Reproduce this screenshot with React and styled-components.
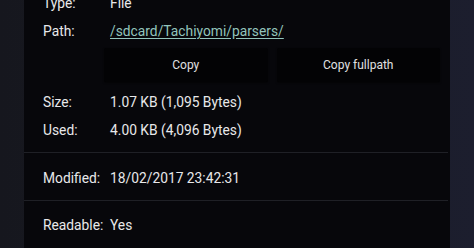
import React from "react";
import styled, { createGlobalStyle } from "styled-components";

const GlobalStyle = createGlobalStyle`
  html, body {
    margin: 0;
    padding: 0;
    height: 100%;
    overflow: hidden;
  }
  body {
    background: linear-gradient(90deg, #16171e 0%, #191a25 50%, #1c1e2e 100%);
    font-family: Roboto, "Liberation Sans", sans-serif;
  }
`;

const Page = styled.div`
  display: flex;
  justify-content: center;
  height: 248px;
`;

// the dialog is scrolled a little: the Type row is half hidden at the top
const Dialog = styled.div`
  width: 426px;
  margin-top: -11px;
  background: #07070b;
  display: flex;
  flex-direction: column;
`;

const Section = styled.div`
  display: flex;
  flex-direction: column;
  padding: ${props => props.pad || "0"};
  border-bottom: ${props => (props.divider ? "1px solid #1f2026" : "none")};
  margin-right: 2px;
`;

const Row = styled.div`
  display: flex;
  align-items: center;
  height: 28px;
  padding-left: 19px;
  font-size: 13.8px;
  color: #e8e8ea;
`;

const Label = styled.span`
  width: 67px;
  flex-shrink: 0;
`;

const Value = styled.span`
  color: ${props => (props.link ? "#92c4bb" : "#e8e8ea")};
  text-decoration: ${props => (props.link ? "underline" : "none")};
  text-underline-offset: 2px;
`;

const ButtonRow = styled.div`
  display: flex;
  gap: 9px;
  padding: 3px 8px 6px 80px;
`;

const Button = styled.button`
  flex: 1;
  height: 34px;
  background: #030305;
  border: none;
  border-radius: 2px;
  color: #e0e0e2;
  font-family: Roboto, "Liberation Sans", sans-serif;
  font-size: 12px;
  padding: 0;
  box-shadow: 0 1px 2px rgba(0, 0, 0, 0.5);
`;

export default function App() {
  return (
    <>
      <GlobalStyle />
      <Page>
        <Dialog>
          <Section divider pad="0 0 8px 0">
            <Row>
              <Label>Type:</Label>
              <Value>File</Value>
            </Row>
            <Row>
              <Label>Path:</Label>
              <Value link>/sdcard/Tachiyomi/parsers/</Value>
            </Row>
            <ButtonRow>
              <Button>Copy</Button>
              <Button>Copy fullpath</Button>
            </ButtonRow>
            <Row>
              <Label>Size:</Label>
              <Value>1.07 KB (1,095 Bytes)</Value>
            </Row>
            <Row>
              <Label>Used:</Label>
              <Value>4.00 KB (4,096 Bytes)</Value>
            </Row>
          </Section>
          <Section divider pad="11px 0 8px 0">
            <Row>
              <Label>Modified:</Label>
              <Value>18/02/2017 23:42:31</Value>
            </Row>
          </Section>
          <Section pad="10px 0 8px 0">
            <Row>
              <Label>Readable:</Label>
              <Value>Yes</Value>
            </Row>
          </Section>
        </Dialog>
      </Page>
    </>
  );
}
